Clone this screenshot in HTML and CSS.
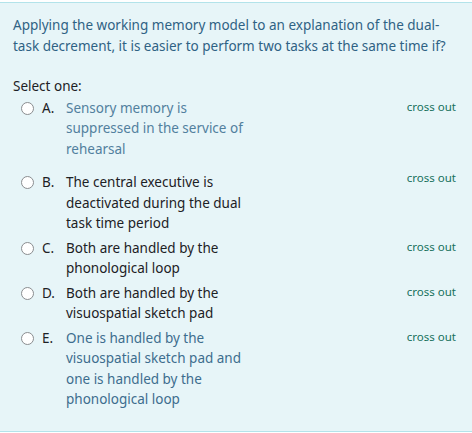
FILE: index.html
```html
<!DOCTYPE html>
<html>
<head>
<meta charset="utf-8">
<link rel="stylesheet" href="styles.css">
</head>
<body>
<div class="formulation">
  <div class="qtext">Applying the working memory model to an explanation of the dual-task decrement, it is easier to perform two tasks at the same time if?</div>
  <div class="prompt">Select one:</div>
  <div class="answers">
    <div class="opt opt-a">
      <span class="radio"></span>
      <span class="letter">A.</span>
      <span class="text tint">Sensory memory is suppressed in the service of rehearsal</span>
      <span class="cross">cross out</span>
    </div>
    <div class="opt opt-b">
      <span class="radio"></span>
      <span class="letter">B.</span>
      <span class="text">The central executive is deactivated during the dual task time period</span>
      <span class="cross">cross out</span>
    </div>
    <div class="opt">
      <span class="radio"></span>
      <span class="letter">C.</span>
      <span class="text">Both are handled by the phonological loop</span>
      <span class="cross">cross out</span>
    </div>
    <div class="opt">
      <span class="radio"></span>
      <span class="letter">D.</span>
      <span class="text">Both are handled by the visuospatial sketch pad</span>
      <span class="cross">cross out</span>
    </div>
    <div class="opt">
      <span class="radio"></span>
      <span class="letter">E.</span>
      <span class="text tint2">One is handled by the visuospatial sketch pad and one is handled by the phonological loop</span>
      <span class="cross">cross out</span>
    </div>
  </div>
</div>
</body>
</html>
```
FILE: styles.css
```css
html, body {
  margin: 0;
  padding: 0;
  background: #ffffff;
}
body {
  padding-top: 2px;
  font-family: "Noto Sans", "Open Sans", sans-serif;
  font-size: 13.5px;
  line-height: 20.5px;
  color: #1d2125;
}
.formulation {
  background: #e7f5f8;
  border-top: 1px solid #b3e3ea;
  border-bottom: 1px solid #b3e3ea;
  padding: 12px 13px 20px 13px;
  height: 396px;
  box-sizing: content-box;
}
.qtext {
  color: #2f6284;
}
.prompt {
  margin-top: 20px;
}
.answers {
  margin-top: 1px;
}
.opt {
  display: flex;
  align-items: flex-start;
  margin-bottom: 4px;
}
.opt-a {
  margin-bottom: 13px;
}
.radio {
  flex: none;
  width: 11px;
  height: 11px;
  border: 1px solid #8a8d90;
  border-radius: 50%;
  background: #ffffff;
  margin: 4px 0 0 8px;
}
.letter {
  flex: none;
  width: 24px;
  margin-left: 8px;
}
.text {
  width: 180px;
  flex: none;
}
.tint {
  color: #52809e;
}
.tint2 {
  color: #3d6d8e;
}
.cross {
  margin-left: auto;
  font-size: 11.5px;
  color: #16705c;
  line-height: 18px;
  margin-right: 3px;
}
.opt-b .cross {
  margin-top: -3px;
}
```
